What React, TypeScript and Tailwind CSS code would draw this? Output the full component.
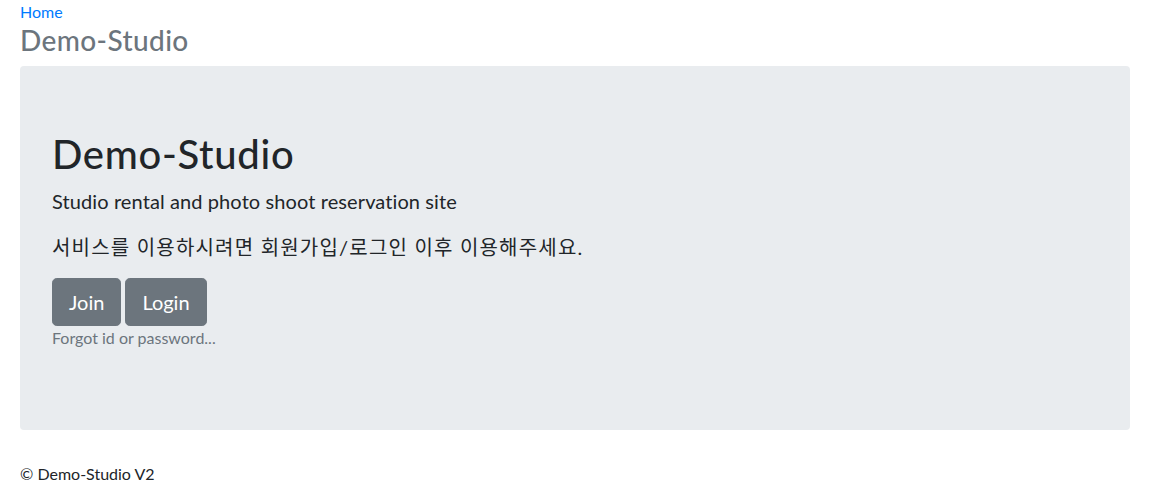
import React from 'react';

const font = { fontFamily: 'Lato, "Noto Sans CJK KR", sans-serif' };

export default function App() {
  return (
    <div className="min-h-screen bg-white text-[#212529] px-5" style={font}>
      {/* header */}
      <div className="text-base leading-6">
        <a href="#" className="text-[#007bff]">Home</a>
      </div>
      <h3 className="text-[28px] leading-[1.2] font-medium tracking-[0.4px] text-[#6c757d] mb-2">Demo-Studio</h3>

      {/* jumbotron */}
      <div className="w-[1110px] bg-[#e9ecef] rounded px-8 py-16 mb-8">
        <h1 className="text-[40px] leading-[1.2] font-medium tracking-[0.7px] mb-2">Demo-Studio</h1>
        <p className="text-xl leading-[1.5] tracking-[0.1px] mb-4">Studio rental and photo shoot reservation site</p>
        <p className="text-xl leading-[1.5] tracking-[1.2px] mb-4">서비스를 이용하시려면 회원가입/로그인 이후 이용해주세요.</p>
        <div className="flex gap-1">
          <button className="bg-[#6c757d] border border-[#6c757d] text-white text-xl leading-[1.5] px-4 py-2 rounded-[4.8px]">Join</button>
          <button className="bg-[#6c757d] border border-[#6c757d] text-white text-xl leading-[1.5] px-4 py-2 rounded-[4.8px]">Login</button>
        </div>
        <p className="text-base leading-6 text-[#6c757d] mb-4">Forgot id or password...</p>
      </div>

      {/* footer */}
      <footer className="text-base leading-6">© Demo-Studio V2</footer>
    </div>
  );
}
